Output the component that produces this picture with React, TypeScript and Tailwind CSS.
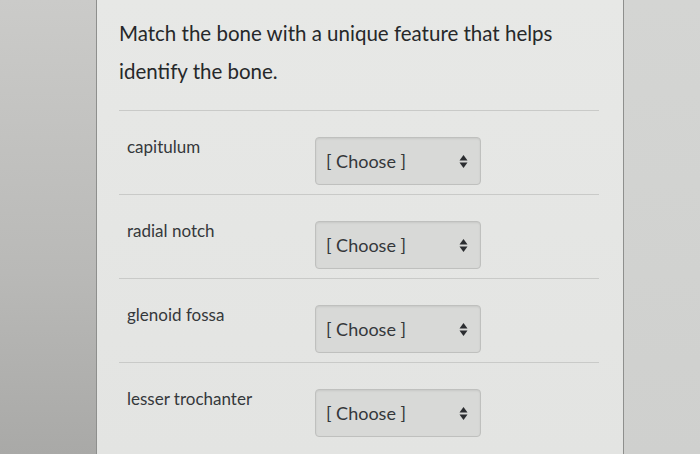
const rows = ["capitulum", "radial notch", "glenoid fossa", "lesser trochanter"];

function Arrows() {
  return (
    <svg width="9" height="15" viewBox="0 0 9 15" className="text-[#2b2d30]">
      <path d="M4.5 1 L8.5 6.5 H0.5 Z" fill="currentColor" />
      <path d="M4.5 14 L8.5 8.5 H0.5 Z" fill="currentColor" />
    </svg>
  );
}

function Select() {
  return (
    <div className="flex h-[48px] w-[166px] items-center justify-between rounded-[4px] border border-[#bfc0be] bg-[#d8d9d7] pl-[10px] pr-[12px] shadow-[inset_0_1px_2px_rgba(0,0,0,0.08)]">
      <span className="text-[18px] text-[#34373a]">[ Choose ]</span>
      <Arrows />
    </div>
  );
}

export default function App() {
  return (
    <div
      className="flex h-[454px] w-[700px] overflow-hidden bg-[linear-gradient(180deg,#cbcbc9_0%,#b9b9b7_60%,#a9a9a7_100%)]"
      style={{ fontFamily: "Lato, 'Open Sans', sans-serif" }}
    >
      <div className="w-[96px] shrink-0" />
      <div className="h-full w-[528px] shrink-0 border-x border-[#8e8f8d] bg-[linear-gradient(180deg,#e7e8e6_0%,#e3e4e2_100%)] pl-[22px] pr-[24px] pt-[14px]">
        <p className="max-w-[470px] text-[20.5px] leading-[38px] text-[#26282a]">
          Match the bone with a unique feature that helps identify the bone.
        </p>
        <div className="mt-[20px]">
          {rows.map((r) => (
            <div key={r} className="border-t border-[#c9cac8] pt-[26px] pb-[9px]">
              <div className="flex items-start">
                <div className="w-[196px] pl-[8px] text-[17px] leading-[20px] text-[#35383b]">{r}</div>
                <Select />
              </div>
            </div>
          ))}
        </div>
      </div>
      <div className="flex-1 bg-[linear-gradient(180deg,#d4d5d3_0%,#cfd0ce_100%)]" />
    </div>
  );
}
